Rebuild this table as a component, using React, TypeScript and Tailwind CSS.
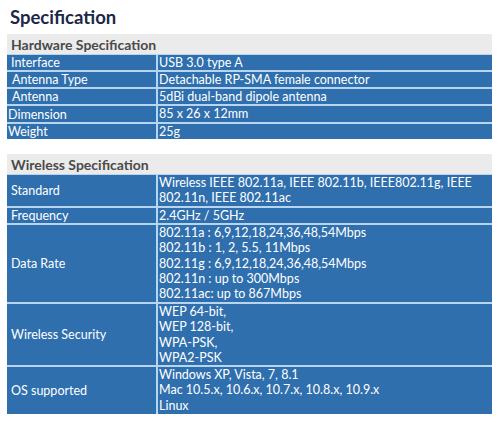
import React from "react";

const BLUE = "bg-[#2f6fae]";

type Row = { label: string; value: string[]; h: string; pl?: string };

const hardware: Row[] = [
  { label: "Interface", value: ["USB 3.0 type A"], h: "h-[15px]", pl: "pl-[4px]" },
  { label: "Antenna Type", value: ["Detachable RP-SMA female connector"], h: "h-[15px]", pl: "pl-[5px]" },
  { label: "Antenna", value: ["5dBi dual-band dipole antenna"], h: "h-[15px]", pl: "pl-[5px]" },
  { label: "Dimension", value: ["85 x 26 x 12mm"], h: "h-[16px]", pl: "pl-[1px]" },
  { label: "Weight", value: ["25g"], h: "h-[15px]", pl: "pl-[1px]" },
];

const wireless: Row[] = [
  {
    label: "Standard",
    value: ["Wireless IEEE 802.11a, IEEE 802.11b, IEEE802.11g, IEEE", "802.11n, IEEE 802.11ac"],
    h: "h-[31px]",
    pl: "pl-[4px]",
  },
  { label: "Frequency", value: ["2.4GHz / 5GHz"], h: "h-[15px]", pl: "pl-[4px]" },
  {
    label: "Data Rate",
    value: [
      "802.11a : 6,9,12,18,24,36,48,54Mbps",
      "802.11b : 1, 2, 5.5, 11Mbps",
      "802.11g : 6,9,12,18,24,36,48,54Mbps",
      "802.11n : up to 300Mbps",
      "802.11ac: up to 867Mbps",
    ],
    h: "h-[77px]",
    pl: "pl-[4px]",
  },
  {
    label: "Wireless Security",
    value: ["WEP 64-bit,", "WEP 128-bit,", "WPA-PSK,", "WPA2-PSK"],
    h: "h-[61px]",
    pl: "pl-[4px]",
  },
  {
    label: "OS supported",
    value: ["Windows XP, Vista, 7, 8.1", "Mac 10.5.x, 10.6.x, 10.7.x, 10.8.x, 10.9.x", "Linux"],
    h: "h-[47px]",
    pl: "pl-[4px]",
  },
];

function Section({ title, rows }: { title: string; rows: Row[] }) {
  return (
    <div className="ml-[7px] w-[485px]">
      <div className="h-[20px] bg-[#ebebeb] pl-[4px] text-[14px] font-bold leading-[21px] text-[#4a4a4a]">
        {title}
      </div>
      <div className="flex flex-col gap-[2px] bg-[#b7d5ef] pt-[1px]">
        {rows.map((r) => (
          <div key={r.label} className={`grid grid-cols-[149px_1fr] gap-x-[2px] ${r.h}`}>
            <div className={`${BLUE} ${r.pl} flex items-center text-[12.5px] leading-[15px] text-white`}>
              {r.label}
            </div>
            <div className={`${BLUE} pl-[1px] text-[12.5px] leading-[15.3px] text-white`}>
              {r.value.map((v, i) => (
                <div key={i}>{v}</div>
              ))}
            </div>
          </div>
        ))}
      </div>
    </div>
  );
}

export default function App() {
  return (
    <div
      className="h-[423px] w-[500px] overflow-hidden bg-white"
      style={{ fontFamily: "Lato, 'Noto Sans', sans-serif" }}
    >
      <div className="pl-[10px] pt-[6px] text-[18.5px] font-bold leading-[22px] text-[#1b2847]">
        Specification
      </div>
      <div className="mt-[6px]">
        <Section title="Hardware Specification" rows={hardware} />
      </div>
      <div className="mt-[15px]">
        <Section title="Wireless Specification" rows={wireless} />
      </div>
    </div>
  );
}
